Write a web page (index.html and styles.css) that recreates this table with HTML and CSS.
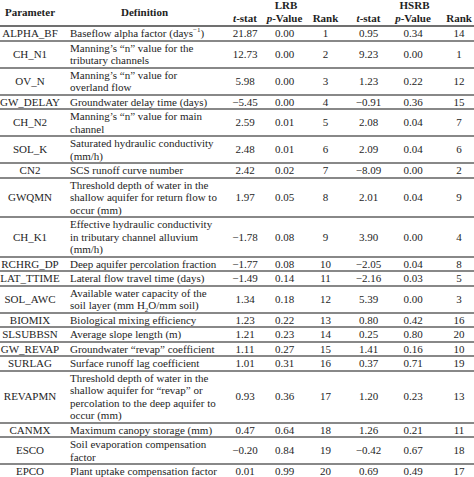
FILE: index.html
```html
<!DOCTYPE html>
<html>
<head>
<meta charset="utf-8">
<link rel="stylesheet" href="styles.css">
</head>
<body>
<table class="tbl">
<colgroup>
<col class="c-par"><col class="c-def"><col class="c-t1"><col class="c-p1"><col class="c-r1"><col class="c-t2"><col class="c-p2"><col class="c-r2">
</colgroup>
<thead>
<tr class="h1">
<th rowspan="2" class="hp">Parameter</th>
<th rowspan="2" class="hd">Definition</th>
<th colspan="3">LRB</th>
<th colspan="3">HSRB</th>
</tr>
<tr class="h2">
<th><i>t</i>-stat</th><th><i>p</i>-Value</th><th>Rank</th>
<th><i>t</i>-stat</th><th><i>p</i>-Value</th><th>Rank</th>
</tr>
</thead>
<tbody>
<tr><td>ALPHA_BF</td><td class="def">Baseflow alpha factor (days<sup>−1</sup>)</td><td>21.87</td><td>0.00</td><td>1</td><td>0.95</td><td>0.34</td><td>14</td></tr>
<tr><td>CH_N1</td><td class="def">Manning’s “n” value for the<br>tributary channels</td><td>12.73</td><td>0.00</td><td>2</td><td>9.23</td><td>0.00</td><td>1</td></tr>
<tr><td>OV_N</td><td class="def">Manning’s “n” value for<br>overland flow</td><td>5.98</td><td>0.00</td><td>3</td><td>1.23</td><td>0.22</td><td>12</td></tr>
<tr><td>GW_DELAY</td><td class="def">Groundwater delay time (days)</td><td>−5.45</td><td>0.00</td><td>4</td><td>−0.91</td><td>0.36</td><td>15</td></tr>
<tr><td>CH_N2</td><td class="def">Manning’s “n” value for main<br>channel</td><td>2.59</td><td>0.01</td><td>5</td><td>2.08</td><td>0.04</td><td>7</td></tr>
<tr><td>SOL_K</td><td class="def">Saturated hydraulic conductivity<br>(mm/h)</td><td>2.48</td><td>0.01</td><td>6</td><td>2.09</td><td>0.04</td><td>6</td></tr>
<tr><td>CN2</td><td class="def">SCS runoff curve number</td><td>2.42</td><td>0.02</td><td>7</td><td>−8.09</td><td>0.00</td><td>2</td></tr>
<tr><td>GWQMN</td><td class="def">Threshold depth of water in the<br>shallow aquifer for return flow to<br>occur (mm)</td><td>1.97</td><td>0.05</td><td>8</td><td>2.01</td><td>0.04</td><td>9</td></tr>
<tr><td>CH_K1</td><td class="def">Effective hydraulic conductivity<br>in tributary channel alluvium<br>(mm/h)</td><td>−1.78</td><td>0.08</td><td>9</td><td>3.90</td><td>0.00</td><td>4</td></tr>
<tr><td>RCHRG_DP</td><td class="def">Deep aquifer percolation fraction</td><td>−1.77</td><td>0.08</td><td>10</td><td>−2.05</td><td>0.04</td><td>8</td></tr>
<tr><td>LAT_TTIME</td><td class="def">Lateral flow travel time (days)</td><td>−1.49</td><td>0.14</td><td>11</td><td>−2.16</td><td>0.03</td><td>5</td></tr>
<tr><td>SOL_AWC</td><td class="def">Available water capacity of the<br>soil layer (mm H<sub>2</sub>O/mm soil)</td><td>1.34</td><td>0.18</td><td>12</td><td>5.39</td><td>0.00</td><td>3</td></tr>
<tr><td>BIOMIX</td><td class="def">Biological mixing efficiency</td><td>1.23</td><td>0.22</td><td>13</td><td>0.80</td><td>0.42</td><td>16</td></tr>
<tr><td>SLSUBBSN</td><td class="def">Average slope length (m)</td><td>1.21</td><td>0.23</td><td>14</td><td>0.25</td><td>0.80</td><td>20</td></tr>
<tr><td>GW_REVAP</td><td class="def">Groundwater “revap” coefficient</td><td>1.11</td><td>0.27</td><td>15</td><td>1.41</td><td>0.16</td><td>10</td></tr>
<tr><td>SURLAG</td><td class="def">Surface runoff lag coefficient</td><td>1.01</td><td>0.31</td><td>16</td><td>0.37</td><td>0.71</td><td>19</td></tr>
<tr><td>REVAPMN</td><td class="def">Threshold depth of water in the<br>shallow aquifer for “revap” or<br>percolation to the deep aquifer to<br>occur (mm)</td><td>0.93</td><td>0.36</td><td>17</td><td>1.20</td><td>0.23</td><td>13</td></tr>
<tr><td>CANMX</td><td class="def">Maximum canopy storage (mm)</td><td>0.47</td><td>0.64</td><td>18</td><td>1.26</td><td>0.21</td><td>11</td></tr>
<tr><td>ESCO</td><td class="def">Soil evaporation compensation<br>factor</td><td>−0.20</td><td>0.84</td><td>19</td><td>−0.42</td><td>0.67</td><td>18</td></tr>
<tr><td>EPCO</td><td class="def">Plant uptake compensation factor</td><td>0.01</td><td>0.99</td><td>20</td><td>0.69</td><td>0.49</td><td>17</td></tr>
</tbody>
</table>
</body>
</html>
```

FILE: styles.css
```css
html, body {
  margin: 0;
  padding: 0;
  background: #fff;
  overflow: hidden;
}
.tbl {
  border-collapse: collapse;
  table-layout: fixed;
  width: 486px;
  margin: 0 0 0 -4px;
  font-family: "Liberation Serif", serif;
  font-size: 11px;
  line-height: 12.5px;
  color: #1e1e1e;
}
.c-par { width: 68px; }
.c-def { width: 161px; }
.c-t1 { width: 40px; }
.c-p1 { width: 39px; }
.c-r1 { width: 43px; }
.c-t2 { width: 43px; }
.c-p2 { width: 46px; }
.c-r2 { width: 46px; }
.tbl th {
  font-weight: bold;
  text-align: center;
  padding: 0;
  white-space: nowrap;
}
.h1 th {
  height: 11px;
  line-height: 11px;
}
.h2 th { height: 14px; }
.h2 th, .hp, .hd { border-bottom: 2px solid #707070; }
.tbl td {
  padding: 0;
  text-align: center;
  white-space: nowrap;
  border-bottom: 2px solid #888;
  vertical-align: middle;
}
.tbl td.def {
  text-align: left;
  padding-left: 6px;
}
sup, sub {
  font-size: 7px;
  line-height: 0;
}
```
